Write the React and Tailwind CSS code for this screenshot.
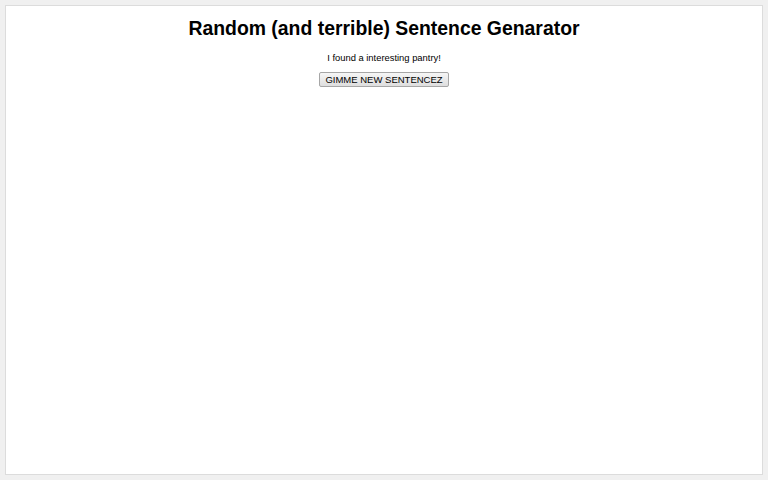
export default function App() {
  return (
    <div className="w-[768px] h-[480px] bg-[#f0f0f0] p-[5px] box-border" style={{ fontFamily: '"Liberation Sans", Arial, sans-serif' }}>
      <div className="h-[470px] w-[758px] bg-white border border-[#dcdcdc] box-border flex flex-col items-center">
        <h1 className="text-[19.4px] leading-[24px] font-bold text-black mt-[10px]">Random (and terrible) Sentence Genarator</h1>
        <p className="text-[9.4px] leading-[11px] text-black mt-[12px]">I found a interesting pantry!</p>
        <button className="mt-[9px] h-[15px] px-[5px] text-[9.5px] leading-[13px] text-black border border-[#a6a6a6] rounded-[2px] bg-gradient-to-b from-[#f6f6f6] to-[#dedede]">GIMME NEW SENTENCEZ</button>
      </div>
    </div>
  );
}
